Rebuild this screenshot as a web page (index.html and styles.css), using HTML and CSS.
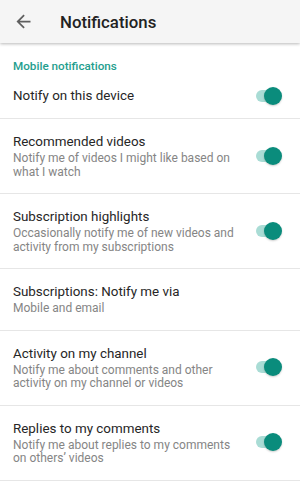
FILE: index.html
```html
<!DOCTYPE html>
<html>
<head>
<meta charset="utf-8">
<link rel="stylesheet" href="styles.css">
</head>
<body>
<header class="appbar">
  <svg class="back" viewBox="0 0 24 24" width="21" height="21"><path d="M20 11H7.83l5.59-5.59L12 4l-8 8 8 8 1.41-1.41L7.83 13H20v-2z" fill="#5f5f5f"/></svg>
  <h1 class="title">Notifications</h1>
</header>
<main>
  <div class="section-label">Mobile notifications</div>
  <div class="row single">
    <div class="text"><div class="row-title">Notify on this device</div></div>
    <div class="toggle"><span class="track"></span><span class="thumb"></span></div>
  </div>
  <div class="row">
    <div class="text"><div class="row-title">Recommended videos</div><div class="row-sub">Notify me of videos I might like based on what I watch</div></div>
    <div class="toggle"><span class="track"></span><span class="thumb"></span></div>
  </div>
  <div class="row">
    <div class="text"><div class="row-title">Subscription highlights</div><div class="row-sub">Occasionally notify me of new videos and activity from my subscriptions</div></div>
    <div class="toggle"><span class="track"></span><span class="thumb"></span></div>
  </div>
  <div class="row">
    <div class="text"><div class="row-title">Subscriptions: Notify me via</div><div class="row-sub">Mobile and email</div></div>
  </div>
  <div class="row">
    <div class="text"><div class="row-title">Activity on my channel</div><div class="row-sub">Notify me about comments and other activity on my channel or videos</div></div>
    <div class="toggle"><span class="track"></span><span class="thumb"></span></div>
  </div>
  <div class="row">
    <div class="text"><div class="row-title">Replies to my comments</div><div class="row-sub">Notify me about replies to my comments on others’ videos</div></div>
    <div class="toggle"><span class="track"></span><span class="thumb"></span></div>
  </div>
</main>
</body>
</html>
```
FILE: styles.css
```css
html, body {
  margin: 0;
  padding: 0;
  background: #fff;
  font-family: Roboto, "Noto Sans", Arial, sans-serif;
}
.appbar {
  height: 43px;
  background: #f5f5f5;
  display: flex;
  align-items: center;
  padding-left: 13px;
  box-shadow: 0 1px 3px rgba(0,0,0,0.28);
  position: relative;
  z-index: 1;
}
.back {
  display: block;
}
.title {
  margin: 0 0 0 26px;
  font-size: 16.8px;
  font-weight: 500;
  color: #222;
}
.section-label {
  margin-top: 15px;
  padding-left: 13px;
  font-size: 11.7px;
  line-height: 16px;
  font-weight: 500;
  color: #1f9e8e;
}
.row {
  display: flex;
  align-items: center;
  padding: 13px 18px 14px 13px;
  border-bottom: 1px solid #e6e6e6;
}
.row.single {
  padding-top: 12px;
  padding-bottom: 12px;
}
.text {
  flex: 1;
  min-width: 0;
  padding-right: 10px;
}
.row-title {
  font-size: 13.4px;
  line-height: 20px;
  color: #262626;
}
.row-sub {
  font-size: 12px;
  line-height: 13.5px;
  color: #858585;
}
.toggle {
  position: relative;
  width: 26px;
  height: 18px;
  flex: none;
}
.track {
  position: absolute;
  left: 0;
  top: 3px;
  width: 22px;
  height: 12px;
  border-radius: 6px;
  background: #a9dcd5;
}
.thumb {
  position: absolute;
  right: 0;
  top: 0;
  width: 18px;
  height: 18px;
  border-radius: 50%;
  background: #0a8c7c;
  box-shadow: 0 1px 2px rgba(0,0,0,0.2);
}
```
